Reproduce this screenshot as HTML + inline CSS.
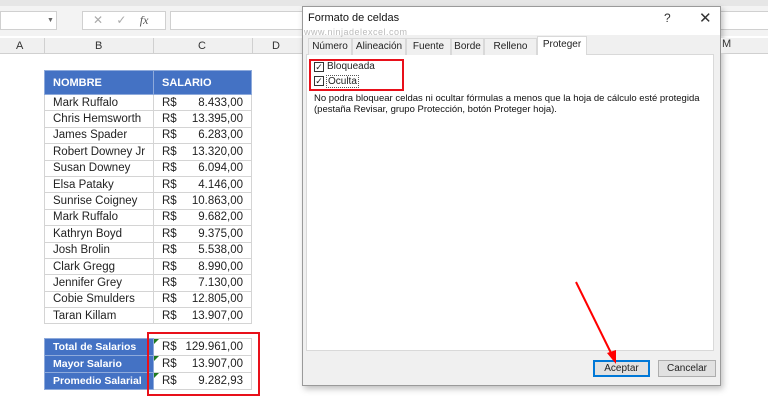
<!DOCTYPE html>
<html><head><style>
*{margin:0;padding:0;box-sizing:border-box}
body{width:768px;height:405px;background:#fff;position:relative;overflow:hidden;font-family:"Liberation Sans",sans-serif;font-size:11px;color:#222}
.a{position:absolute}
table{border-collapse:collapse;position:absolute;left:44px;font-size:11.5px;table-layout:fixed;width:207px}
td{border:1px solid #d4d4d4;height:16.4px;padding:0 8px;white-space:nowrap;overflow:hidden}
td.c{width:98px}
td.b{width:109px}
.c span{float:right}
.h td{background:#4472c4;color:#fff;font-weight:bold;height:24px;border-color:#8eaadb;font-size:11px}
.t td.b{background:#4472c4;color:#fff;font-weight:bold;border-color:#8eaadb;height:17px;font-size:10.5px;padding:0 5px 0 8px}
.t td.c{height:17px;position:relative}
.tri{position:absolute;left:0;top:0;width:0;height:0;border-top:5px solid #1e7a1e;border-right:5px solid transparent}
.tab{position:absolute;top:38px;height:17px;border:1px solid #d9d9d9;border-bottom:none;background:#f0f0f0;font-size:10px;text-align:center;line-height:16px}
</style></head><body>
<div class="a" style="left:0;top:0;width:768px;height:6px;background:#e6e6e6"></div>
<div class="a" style="left:0;top:6px;width:768px;height:30px;background:#f3f3f3"></div>
<div class="a" style="left:0;top:11px;width:57px;height:19px;background:#fff;border:1px solid #d0d0d0"></div>
<div class="a" style="left:47px;top:17px;font-size:7px;color:#666">▼</div>
<div class="a" style="left:82px;top:11px;width:84px;height:19px;background:#fff;border:1px solid #d0d0d0;color:#aaa;font-size:12px;line-height:17px;padding-left:10px">✕&nbsp;&nbsp;&nbsp;&nbsp;✓&nbsp;&nbsp;&nbsp;&nbsp;<i style="color:#555;font-family:'Liberation Serif'">fx</i></div>
<div class="a" style="left:170px;top:11px;width:600px;height:19px;background:#fff;border:1px solid #d0d0d0"></div>
<div class="a" style="left:0;top:38px;width:768px;height:16px;background:#f0f0f0;border-bottom:1px solid #d0d0d0"></div>
<div class="a" style="left:16px;top:40px;font-size:11px;color:#333">A</div>
<div class="a" style="left:95px;top:40px;font-size:11px;color:#333">B</div>
<div class="a" style="left:198px;top:40px;font-size:11px;color:#333">C</div>
<div class="a" style="left:272px;top:40px;font-size:11px;color:#333">D</div>
<div class="a" style="left:44px;top:38px;width:1px;height:16px;background:#d0d0d0"></div>
<div class="a" style="left:153px;top:38px;width:1px;height:16px;background:#d0d0d0"></div>
<div class="a" style="left:252px;top:38px;width:1px;height:16px;background:#d0d0d0"></div>

<table style="top:70px">
<tr class="h"><td class="b">NOMBRE</td><td class="c">SALARIO</td></tr>
<tr><td class="b">Mark Ruffalo</td><td class="c">R$<span>8.433,00</span></td></tr>
<tr><td class="b">Chris Hemsworth</td><td class="c">R$<span>13.395,00</span></td></tr>
<tr><td class="b">James Spader</td><td class="c">R$<span>6.283,00</span></td></tr>
<tr><td class="b">Robert Downey Jr</td><td class="c">R$<span>13.320,00</span></td></tr>
<tr><td class="b">Susan Downey</td><td class="c">R$<span>6.094,00</span></td></tr>
<tr><td class="b">Elsa Pataky</td><td class="c">R$<span>4.146,00</span></td></tr>
<tr><td class="b">Sunrise Coigney</td><td class="c">R$<span>10.863,00</span></td></tr>
<tr><td class="b">Mark Ruffalo</td><td class="c">R$<span>9.682,00</span></td></tr>
<tr><td class="b">Kathryn Boyd</td><td class="c">R$<span>9.375,00</span></td></tr>
<tr><td class="b">Josh Brolin</td><td class="c">R$<span>5.538,00</span></td></tr>
<tr><td class="b">Clark Gregg</td><td class="c">R$<span>8.990,00</span></td></tr>
<tr><td class="b">Jennifer Grey</td><td class="c">R$<span>7.130,00</span></td></tr>
<tr><td class="b">Cobie Smulders</td><td class="c">R$<span>12.805,00</span></td></tr>
<tr><td class="b">Taran Killam</td><td class="c">R$<span>13.907,00</span></td></tr>
</table>
<table class="t" style="top:338px">
<tr><td class="b">Total de Salarios</td><td class="c"><div class="tri"></div>R$<span>129.961,00</span></td></tr>
<tr><td class="b">Mayor Salario</td><td class="c"><div class="tri"></div>R$<span>13.907,00</span></td></tr>
<tr><td class="b">Promedio Salarial</td><td class="c"><div class="tri"></div>R$<span>9.282,93</span></td></tr>
</table>
<div class="a" style="left:147px;top:332px;width:113px;height:64px;border:2px solid #e8101a"></div>

<!-- dialog -->
<div class="a" style="left:302px;top:6px;width:419px;height:380px;background:#f0f0f0;border:1px solid #9a9a9a;box-shadow:2px 3px 6px rgba(0,0,0,.25)"></div>
<div class="a" style="left:303px;top:7px;width:417px;height:28px;background:#fff"></div>
<div class="a" style="left:308px;top:12px;font-size:11px;color:#111">Formato de celdas</div>
<div class="a" style="left:304px;top:27px;font-size:9px;color:#bbb;letter-spacing:.5px">www.ninjadelexcel.com</div>
<div class="a" style="left:664px;top:11px;font-size:12px;color:#333">?</div>
<div class="a" style="left:699px;top:9px;font-size:15px;color:#333">✕</div>
<div class="a" style="left:306px;top:54px;width:408px;height:297px;background:#fff;border:1px solid #d9d9d9"></div>
<div class="tab" style="left:308px;width:44px">Número</div>
<div class="tab" style="left:352px;width:54px">Alineación</div>
<div class="tab" style="left:406px;width:45px">Fuente</div>
<div class="tab" style="left:451px;width:33px">Borde</div>
<div class="tab" style="left:484px;width:53px">Relleno</div>
<div class="tab" style="left:537px;top:36px;width:50px;height:19px;background:#fff">Proteger</div>
<div class="a" style="left:314px;top:62px;width:10px;height:10px;border:1px solid #333;font-size:9px;line-height:8px;text-align:center">✓</div>
<div class="a" style="left:327px;top:61px;font-size:10px">Bloqueada</div>
<div class="a" style="left:314px;top:76px;width:10px;height:10px;border:1px solid #333;font-size:9px;line-height:8px;text-align:center">✓</div>
<div class="a" style="left:326px;top:75px;font-size:10px;border:1px dotted #555;padding:0 1px">Oculta</div>
<div class="a" style="left:309px;top:59px;width:95px;height:32px;border:2px solid #e8101a"></div>
<div class="a" style="left:314px;top:93px;font-size:9.5px;line-height:11px;color:#111">No podra bloquear celdas ni ocultar fórmulas a menos que la hoja de cálculo esté protegida<br>(pestaña Revisar, grupo Protección, botón Proteger hoja).</div>
<div class="a" style="left:593px;top:360px;width:57px;height:17px;background:#e1e1e1;border:2px solid #0078d7;font-size:10px;text-align:center;line-height:13px">Aceptar</div>
<div class="a" style="left:658px;top:360px;width:58px;height:17px;background:#e1e1e1;border:1px solid #adadad;font-size:10px;text-align:center;line-height:15px">Cancelar</div>
<div class="a" style="left:721px;top:38px;width:47px;height:16px;background:#f0f0f0;border-bottom:1px solid #d0d0d0;font-size:11px;color:#333;padding-left:1px">M</div>
<svg class="a" style="left:0;top:0" width="768" height="405"><line x1="576" y1="282" x2="612" y2="355" stroke="#f00" stroke-width="2"/><polygon points="616,364 607,353 616,350" fill="#f00"/></svg>
</body></html>
